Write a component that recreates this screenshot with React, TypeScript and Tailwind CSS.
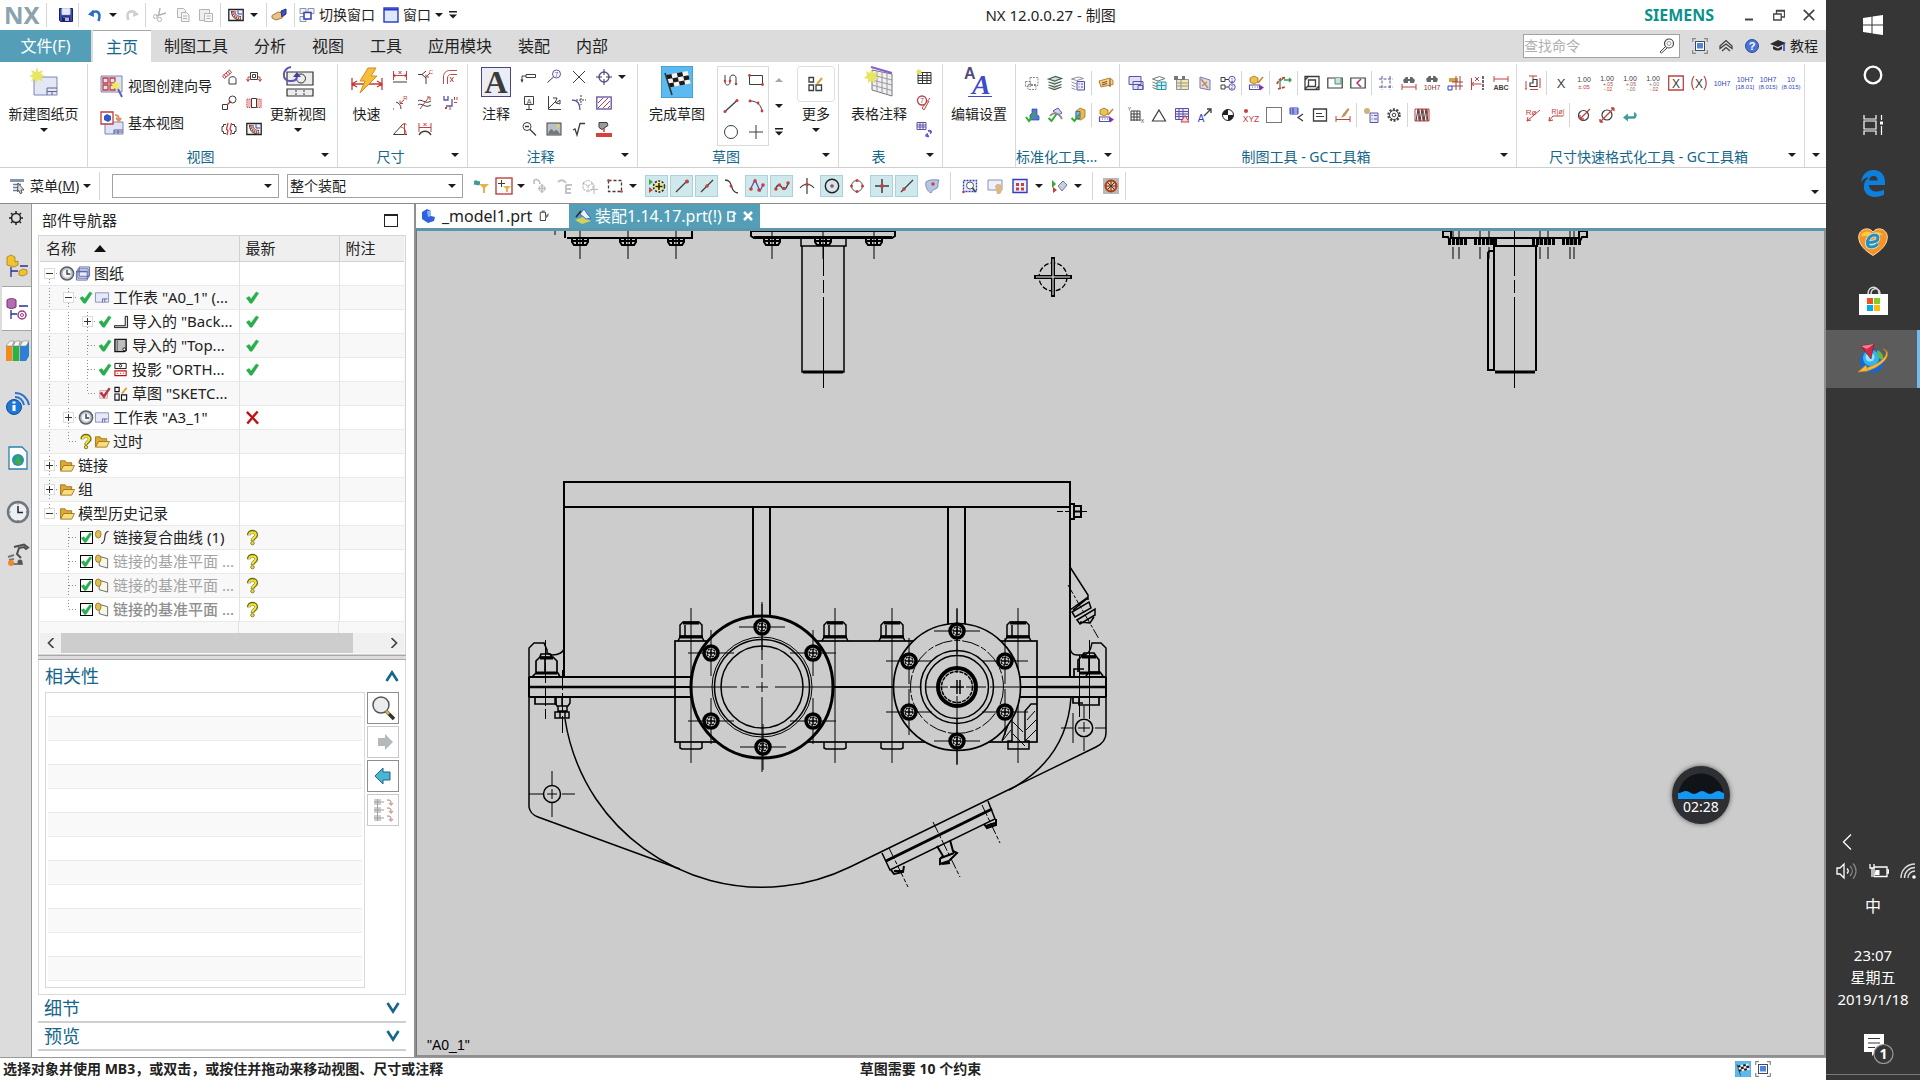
import React from 'react';

type PProps = { d: string; c?: string; f?: string; w?: number; dash?: string };

const P: React.FC<PProps> = ({ d, c = '#3d3d3d', f = 'none', w = 1, dash }) => (
  <path d={d} stroke={c} fill={f} strokeWidth={w} strokeDasharray={dash} />
);

const T: React.FC<{ x: number; y: number; s: number; c?: string; b?: boolean; children: React.ReactNode }> = ({
  x,
  y,
  s,
  c = '#3d3d3d',
  b,
  children,
}) => (
  <text x={x} y={y} fontSize={s} fill={c} fontWeight={b ? 700 : 400} textAnchor="middle" fontFamily="Liberation Sans, sans-serif">
    {children}
  </text>
);

const RED = '#c2403f';
const VIO = '#5b52a8';
const BLU = '#2f3fc0';
const GRY = '#b4b4b4';

// 16 x 16 glyphs
const glyphs: Record<string, React.ReactNode> = {
  save: (<><P d="M1.5 1.5h13v13h-12l-1-1z" c="#16206b" f="#3a4aa8" /><P d="M4 1.5h8v6H4z" c="#c9d2ee" f="#e6ebf8" /><P d="M4.5 10h7v4.5h-7z" c="#16206b" f="#aeb8dc" /><P d="M6 11v3" c="#16206b" w={2} /></>),
  undo: (<><P d="M5 6c5-3.500 9.500-.5 6.500 8" c="#2a6bd0" w={2.600} /><path d="M1 7.500 6.500 2.500 7 10z" fill="#2a6bd0" /></>),
  redo: (<><P d="M11 6C6 2.500 1.500 5.500 4.500 13" c="#cfcfcf" w={2.600} /><path d="M15 7.500 9.500 2.500 9 10z" fill="#cfcfcf" /></>),
  cut: (<><P d="M8 1 6.500 9M14 6 4 9" c={GRY} w={1.500} /><circle cx="3.500" cy="9.500" r="2" fill="none" stroke={GRY} /><circle cx="7.500" cy="12.500" r="2" fill="none" stroke={GRY} /></>),
  copy: (<><P d="M2.500 1.500h6l2 2v7h-8z" c={GRY} f="#f4f4f4" /><P d="M6.500 5.500h5l2.500 2.500v6.500H6.500zM8 9h4M8 11.500h4" c={GRY} f="#f4f4f4" /></>),
  paste: (<><P d="M1.500 2.500h10v11h-10z" c={GRY} f="#eee" /><P d="M4 2.500h5M6.500 6.500h8v8h-8zM8.500 9h4M8.500 11.500h4" c={GRY} f="#f7f7f7" /></>),
  section: (<><P d="M.8 2.500h14.400v11H.8z" c="#222" f="#f4f4f4" w={1.300} /><P d="M5 4c0 5 3 7.500 8 7.500" c={RED} w={2.500} dash="1.500 .8" /><P d="M3.500 4c0 6 3.500 9 9.500 9M7 4c0 3.500 2 5.500 6 5.500" c="#444" /><P d="M10 3.500V7h4" c={BLU} /></>),
  hand: (<><P d="M1 8.500 7 5l5 1-1 5-6 2-4-2z" c="#a9793b" f="#e8c184" /><P d="m10 4 5-2v5l-4 3z" c="#26307c" f="#4352b8" /></>),
  switchWin: (<><P d="M1 1.500h6v5H1zM9 1.500h6v5H9zM1 9.500h6v5H1z" c="#8d96a6" f="#eef1f6" /><P d="M5 5.500h7v6.500H5z" c={BLU} f="#fff" w={1.500} /></>),
  win: (<><rect x="1" y="1" width="14" height="14" fill="#dce8fb" stroke="#2636c8" strokeWidth="1.400" /><P d="M1 2.500h14" c="#2636c8" w={2} /></>),
  projAngle: (<><P d="m1.500 7 7-6 2 2.500-7 6zM3 5.500l2 2.500M5 4l2 2.500M7 2.500 9 5" c={RED} /><P d="M8 15V9.500C10 7 14.500 7 15 10v5z" /></>),
  revolve: (<><P d="M4.500 3.500h7v7h-7zM6.500 5.500h3v3h-3z" /><P d="M2 12V8h2M14 12V8h-2M.5 10 2 12.500 3.500 10M12.500 10l1.500 2.500 1.500-2.500" c={RED} /></>),
  detail: (<><circle cx="11.500" cy="4.500" r="3.500" fill="none" stroke="#3d3d3d" /><P d="M1.500 9.500h5v5h-5z" /><P d="m6 10 4-4" c={RED} w={1.500} /></>),
  crossSec: (<><P d="M.8 4h14.400v8.500H.8z" c={RED} f="#f3b7b7" dash="1 1" /><P d="M5.500 3.500h5v9h-5z" f="#fff" /></>),
  breakView: (<><P d="M5 3.500H2.500v2H1v5h1.500v2H5M11 3.500h2.500v2H15v5h-1.500v2H11" /><P d="M7 2 5.500 8 7 10l-1 4M10.500 2 9 8l1.500 2-1 4" c={RED} w={1.300} /></>),
  dimLin: (<><P d="M1.500 2v9M14.500 2v9M1.500 6.500h13M3.500 5 1.500 6.500l2 1.500M12.500 5l2 1.500-2 1.500M6.500 2l3 3M9.500 2l-3 3" c={RED} /><P d="M1 13h14" /></>),
  dimC: (<><P d="M1 5.500h4L9 9v6M5 5.500 9 2" /><P d="M9 8l4-4M9 5.500V8h3" c={RED} /><T x={14} y={5} s={6} c={RED}>C</T></>),
  dimThick: (<><P d="M1.500 15V8C1.500 4 4 1.500 8 1.500h7M5.500 15V9c0-2 1.500-3.500 3-3.500h6.500" c="#b0514f" /><P d="M8 8l3.500 5M11.500 8 8 13" c={RED} /></>),
  dimR: (<><P d="M1.500 13.500v1M4 7c3 1 5 3 5 7" /><P d="M8 8.500 12 5M8 5.500v3h3" c={RED} /><T x={13.5} y={5} s={6} c={RED}>R</T></>),
  dimCurve: (<><P d="M1 6c4-3 7 4 13 0M1 10c4-3 7 4 13 0" /><P d="M3 14 12 2M10 2h3v3" c={RED} /></>),
  dimOrd: (<><P d="M2 1v4h4V1M10 4v7H4" c={VIO} w={1.300} /><P d="M12.500 2v3M15 2v3M12 7.500h3M3 12l2 2M5 12l-2 2M8 12v3" c={RED} /></>),
  dimAng: (<><P d="M11 3 1.500 13.500H15" /><P d="M9 6c4 1 5 4 5 7M12.500 2v12M10.500 4l2-2 2 2" c={RED} /></>),
  dimArc: (<><P d="M2 2v9M14 2v9M2 6.500h12M6.500 2l3 3M9.500 2l-3 3" c={RED} /><P d="M2 14c3-5 9-5 12 0" w={1.400} /></>),
  leader: (<><P d="M1 12V7h4" /><P d="M5 5.500h9.500v3H5z" /><path d="M-.5 10.500h3L1 14z" fill="#3d3d3d" /></>),
  balloon: (<><circle cx="10.500" cy="5" r="4" fill="none" stroke={VIO} /><T x={10.5} y={7.5} s={7} c={VIO}>7</T><P d="M7.500 8 1.500 13.500" /></>),
  xmark: <P d="M2 2l12 12M14 2 2 14" />,
  target: (<><circle cx="8" cy="8" r="5" fill="none" stroke={VIO} strokeWidth="1.400" /><P d="M8 0v6M8 10v6M0 8h6M10 8h6" /></>),
  datum: (<><P d="M3.500 1.500h9v8h-9zM8 9.500V14M5 14.500h6" /><T x={8} y={8.500} s={7}>A</T></>),
  datumTgt: (<><P d="M2.500 1v13.500H15M3 13 10 6" /><P d="M7 3h4L9 8M10 8l4-3v4z" /></>),
  intersect: (<><P d="M1 5c5 0 8 3 8 10" c={VIO} w={1.300} /><P d="M10 0v10M5 5h10" dash="2 1" /></>),
  hatch: (<><rect x=".8" y="2" width="14.400" height="12" fill="#fff" stroke={VIO} strokeWidth="1.300" /><P d="m2 8 5-5M2 13 12 3M7 13l7-7M12 13l2-2" c={RED} /></>),
  zoomOut: (<><circle cx="6" cy="5.500" r="4" fill="none" stroke="#3d3d3d" /><P d="M4 5.500h4M9 8.500l6 6" w={1.300} /></>),
  image: (<><rect x="1" y="2" width="14" height="12" fill="#b9c0c8" stroke="#444" /><path d="M2 13c2-6 4-6 6-2 1-3 3-3 6 2z" fill="#777" /><circle cx="12" cy="5" r="1.500" fill="#e8d74f" /></>),
  sqrt: <P d="m2 9 2-1 2 6L9 2.500h5" w={1.300} />,
  paint: (<><P d="M3 1.500h8l1 3-6 4-3-2z" f="#9a9a9a" /><P d="M8 7v4" c={RED} w={1.500} /><rect x="0" y="12" width="16" height="4" fill="#d9403c" /></>),
  profile: (<><P d="M2 3v7c0 4 5 4 5 0V6c0-4 6-4 6 0v6" /><circle cx="2" cy="9" r="1.300" fill={RED} /><circle cx="7" cy="9" r="1.300" fill={RED} /><circle cx="13" cy="12" r="1.300" fill={RED} /></>),
  rect: (<><P d="M1.500 3.500h13v9h-13z" /><circle cx="1.500" cy="3.500" r="1.400" fill={RED} /><circle cx="14.500" cy="12.500" r="1.400" fill={RED} /></>),
  line: (<><P d="M2 13.500 14 2.500" w={1.300} /><circle cx="2" cy="13.500" r="1.500" fill={RED} /><circle cx="14" cy="2.500" r="1.500" fill={RED} /></>),
  lineEnd: (<><P d="M2 14 13 3" w={1.300} /><circle cx="13" cy="3.500" r="2" fill={RED} /></>),
  lineMid: (<><P d="M2 14 14 2" w={1.300} /><circle cx="8" cy="8" r="1.800" fill={RED} /></>),
  linePt: (<><P d="M2 14 14 2" w={1.300} /><circle cx="5" cy="11" r="1.800" fill={RED} /></>),
  arc: (<><P d="M2 3c7 0 11 4 12 10" /><circle cx="2" cy="3" r="1.400" fill={RED} /><circle cx="10" cy="5" r="1.400" fill={RED} /><circle cx="14" cy="13" r="1.400" fill={RED} /></>),
  circle: <circle cx="8" cy="8" r="6.500" fill="none" stroke="#3d3d3d" />,
  plus: <P d="M8 1v14M1 8h14" />,
  plusPt: (<><P d="M8 1v14M1 8h14" w={1.500} /><circle cx="8" cy="8" r="2" fill={RED} /></>),
  table: (<><path d="M2 3.500h13v11H2z" fill="#fff" stroke="#333" /><P d="M2 6.500h13M2 9h13M2 11.500h13M6.500 3.500v11M11 3.500v11" c="#333" /><circle cx="3" cy="3" r="2.500" fill="#dfe06a" /></>),
  balloonEdit: (<><circle cx="6" cy="5.500" r="4.500" fill="none" stroke={RED} strokeWidth="1.300" /><T x={6} y={8} s={7} c={VIO}>7</T><P d="M14 3 6 13l2 2 5-9" c={RED} /></>),
  tableSync: (<><P d="M1 1.500h9v7H1zM1 4h9M1 6h9M4 1.500v7M7 1.500v7" c={VIO} /><P d="M12 10c3-1 4 1 2 2.500M13 15c-3 1-4-1-1-2" c="#6a5cc8" w={2} /></>),
  assem: (<P d="M1.500 6.500h5v5h-5zM6 2.500h8v8H6zM4 9.500h8v5H4z" c="#8a8a8a" dash="2 1" />),
  layers: (<P d="m1.500 4 7-2.500 6 2-7 2.500zM1.500 7l6 2 7-2.500M1.500 10l6 2 7-2.500M1.500 12.500l6 2 7-2.500" c="#46604f" f="#d6dfd8" w={1.200} />),
  layersDoc: (<><P d="m1.500 4 7-2 5 1.500-7 2zM1.500 7l5 2M1.500 10l4 2M1.500 13l4 1.500" c="#8a90a0" /><P d="M7 6.500h7.500v8.500H7zM8.500 9h1M11 9h2M8.500 12h1M11 12h2" c={VIO} f="#e8eafa" /></>),
  tag: (<><P d="m1 6 11-3 3 2.500v4L3 12z" c="#b98032" f="#f3cf8e" /><P d="m4 8 5-1.500M4 10l5-1.500M12 4v8" c="#7a4b22" /></>),
  cubeOk: (<><path d="M8 2h5v6l2 1v4H6V8l2-2z" fill="#5379d6" stroke="#2747a0" strokeWidth=".7" /><P d="m2 10 3 4 6-8" c="#35ab35" w={2} /></>),
  sheetOk: (<><P d="m6 4 5-3 4 5-4 2z" c={VIO} f="#d7d4f4" /><P d="M3 9c4-5 9-3 12 3" c="#909090" w={2} /><P d="m1.500 11 3 3 5-7" c="#35ab35" w={2} /></>),
  boxOk: (<><path d="m6 4 4-3 5 2v7l-4 3-5-1z" fill="#f0b640" stroke="#9a6c15" strokeWidth=".7" /><P d="M6 4.500h4v7H6z" c="#3f6bc9" f="#8fb0ee" /><P d="m1.500 11 3 3 5-7" c="#35ab35" w={2} /></>),
  boxEdit: (<><path d="m2 3 4-2 4 2v4L6 9 2 7z" fill="#f1c24b" stroke="#8b641b" strokeWidth=".7" /><P d="m10 8 5-6" c="#c28634" w={1.500} /><P d="M1.500 10h10v4.500h-10zM4 12h1M6.500 12h1M9 12h1" c={VIO} w={1.200} /><path d="m12 10 4 2.500-4 3z" fill="#8a2bb8" /></>),
  cards: (<P d="M1 1.500h12v8H1zM5 6.500h10v8H5zM10 10.500h5v4h-5z" c={VIO} f="#dfe2f6" />),
  layersTbl: (<><P d="m1.500 4 7-2.500 5.500 2-7 2.500zM1.500 7l5 2M1.500 10l5 2M1.500 12.500l5 2" c="#6c7b74" /><P d="M6 7h9v7.500H6zM6 10.500h9M10.500 7v7.500" c="#2f97a5" f="#cdeff3" /></>),
  noteTbl: (<><P d="M2.500 4.500h12v10h-12z" c="#8f8fb6" f="#f6eaa0" /><P d="M2.500 8h12M2.500 11h12M7 4.500v10" c="#8f8fb6" /><path d="M0 1h4v3h4V1h3v4H0z" fill="#777" /></>),
  persp: (<><P d="M3 2v11l10 2V5z" c="#7d77b5" f="#dcd9f2" /><P d="m4 4 7 9M5 11l5-4" c="#c2902f" w={1.500} /></>),
  numList: (<><P d="M1 2.500h4v4H1zM1 10h4v4H1zM5 4.500h4M5 12h4" /><circle cx="12" cy="4.500" r="3.200" fill="none" stroke={VIO} /><circle cx="12" cy="12" r="3.200" fill="none" stroke={VIO} /><T x={12} y={6.500} s={6} c={VIO}>1</T><T x={12} y={14} s={6} c={VIO}>2</T></>),
  csys: (<><P d="M8 5h7M4 13V6l4-3M13 3l2 2-2 2" c="#2d9a4a" w={1.300} /><P d="M1 9c2-5 5-7 9-6M2 14l7-2" c={RED} w={1.800} dash="3 1" /></>),
  frame: (<P d="M1 1.500h14v13H1zM4.500 5h7v6.500h-7zM1 5l3.500-3.500M1 14l3.500-3.500M12 14l3-3" w={1.300} />),
  frameIn: (<><P d="M.8 3h14.400v10H.8z" w={1.200} /><P d="M8 3v6h6V3" c="#3f9a56" f="#c6dff2" /></>),
  frameV: (<><P d="M.8 3h14.400v10H.8z" w={1.200} /><P d="M11 4 7 8l4 4" c="#b03070" w={1.500} /></>),
  gridH: (<P d="M4 1v14M12 1v14M1 4h14M1 12h14" c={VIO} dash="3 1.500" />),
  binoDim: (<><path d="M2 5 5 2h2v2h2V2h2l3 3-1 3h-4V6H7v2H3z" fill="#666" /><P d="M1 9v6M15 9v6M1 12h14" c={RED} /></>),
  bino10: (<><path d="M2 4 5 1h2v2h2V1h2l3 3-1 3h-4V5H7v2H3z" fill="#666" /><T x={8} y={15} s={7} c="#8a3030">10H7</T></>),
  binoGrid: (<><path d="M2 3h9v4H2z" fill="#cda544" /><P d="M9 1v14M13 1v14M5 7h11M5 11h11" c="#a04545" /><P d="M1 11h4v4H1z" c={BLU} /></>),
  dimX: (<><P d="M1.500 3v12M1.500 9h10M4 7 1.500 9 4 11M5 2l4 4M9 2 5 6" c={RED} /><P d="M13 1v14" dash="3 1" w={1.500} /></>),
  dimABC: (<><P d="M1 1v6M15 1v6M1 4h14" c={RED} /><T x={8} y={15} s={7} b>ABC</T></>),
  dimBox: (<><P d="M8 4.500h4v7H5V8h3z" w={1.200} /><P d="M4 1h8M1 6v8M15 3v10M5 14.500h8M8 1v3M0 14h2" c={RED} /></>),
  x: <T x={8} y={13} s={13}>X</T>,
  tol1: (<><T x={8} y={7} s={7}>1.00</T><T x={8} y={14} s={6} c={RED}>±.05</T></>),
  tol2: (<><T x={8} y={6} s={7}>1.00</T><T x={9} y={11} s={5} c={RED}>+.05</T><T x={9} y={16} s={5} c={RED}>-.02</T></>),
  tol3: (<><T x={8} y={6} s={7}>1.00</T><T x={9} y={11} s={5} c={RED}>+.05</T><T x={9} y={16} s={5} c="#777">-.00</T></>),
  tol4: (<><T x={8} y={6} s={7}>1.00</T><T x={9} y={11} s={5} c="#777">+.00</T><T x={9} y={16} s={5} c={RED}>-.02</T></>),
  xbox: (<><P d="M.7 1h14.600v14H.7z" c={RED} w={1.300} /><T x={8} y={13} s={12}>X</T></>),
  xparen: (<><P d="M3 1C0 5 0 11 3 15M13 1c3 4 3 10 0 14" c={RED} w={1.200} /><T x={8} y={13} s={12}>X</T></>),
  h7: <T x={8} y={11} s={7} c={BLU}>10H7</T>,
  h7a: (<><T x={8} y={6.500} s={7} c={BLU}>10H7</T><T x={8} y={14} s={6} c={BLU}>[18.01]</T></>),
  h7b: (<><T x={8} y={6.500} s={7} c={BLU}>10H7</T><T x={8} y={14} s={6} c={BLU}>(8.015)</T></>),
  h7c: (<><T x={8} y={6.500} s={7} c={BLU}>10</T><T x={8} y={14} s={6} c={BLU}>(8.015)</T></>),
  gridYX: (<><P d="M3 4h9M3 7h9M3 10h9M3 13h9M3 4v10M6 4v10M9 4v10M12 4v10" /><T x={1.500} y={4} s={5}>Y</T><T x={14.500} y={16} s={5}>X</T></>),
  tri: <P d="M8 3 14.500 14h-13z" w={1.200} />,
  tblTri: (<><P d="M1.500 1.500h13v11h-13zM1.500 4.500h13M1.500 7h13M1.500 9.500h13M5 1.500v11M9 1.500v11" c={VIO} f="#eceaf8" /><P d="M11 8.500 15 15H7z" c={RED} f="#fbdada" /></>),
  aArrow: (<><T x={4} y={15} s={10} c={BLU}>A</T><P d="m7 9 7-7M10 2h4v4" w={1.300} /></>),
  quad: (<><circle cx="8" cy="8" r="5.500" fill="#fff" stroke="#222" /><path d="M8 8V2.500A5.500 5.500 0 0 0 2.500 8zM8 8v5.500A5.500 5.500 0 0 0 13.500 8z" fill="#222" /></>),
  xyz: (<><circle cx="3" cy="4" r="2" fill={RED} /><T x={8} y={15} s={8.500} c={RED}>XYZ</T></>),
  blank: <rect x=".5" y=".5" width="15" height="15" fill="#fff" stroke="#777" />,
  tblC: (<><P d="M1 1h8v6H1zM1 3h8M1 5h8M4 1v6" c={BLU} /><P d="m14 7-5 3.500 5 3.500" w={1.300} /></>),
  note: (<><P d="M1.500 2h13v12h-13z" w={1.300} /><P d="M4 6.500h6M4 9.500h8" w={1.200} /></>),
  brushDim: (<><path d="m8 7 5-6 1.500 1.500L10 9l-4 2z" fill="#b9975a" /><P d="M1 9v6M15 9v6M1 12.500h14" c={RED} /></>),
  gearList: (<><circle cx="4" cy="4" r="3" fill="#cdb27a" /><P d="M7 6h8v9.500H7zM8.500 8.500h1M11 8.500h3M8.500 12h1M11 12h3" c={VIO} f="#e8eafa" /></>),
  gear: (<><circle cx="8" cy="8" r="5.500" fill="none" stroke="#444" strokeWidth="2.500" strokeDasharray="2 1.450" /><circle cx="8" cy="8" r="4.500" fill="#fff" stroke="#444" /><circle cx="8" cy="8" r="1.800" fill="none" stroke="#444" /></>),
  spring: (<><P d="M1 2v12M4 14 6 2M8 14l2-12M12 14l2-12M15 2v12M1 2h14M1 14h14" c={RED} /><P d="M2 14 4 2l2 12L8 2l2 12 2-12 2 12" /></>),
  rphi: (<><P d="M2 14 15 3M2 14l1-4M2 14l4-1" c={RED} /><T x={6} y={8} s={8} c={RED}>Rø</T></>),
  rphiB: (<><P d="m1 14 4-5h10M1 14l.5-4M1 14l4-1" c={RED} /><T x={10} y={7} s={7} c={RED}>R|ø|</T></>),
  dia: (<><circle cx="7.500" cy="8.500" r="5" fill="none" stroke="#3d3d3d" strokeWidth="1.200" /><P d="M4 12 14 2M4 12v-4M4 12h4" c={RED} w={1.300} /></>),
  dia2: (<><circle cx="8" cy="8" r="5" fill="none" stroke="#3d3d3d" strokeWidth="1.200" /><P d="M1 15 15 1M1 15v-3M1 15h3M15 1v3M15 1h-3" c={RED} w={1.300} /></>),
  back: (<><P d="M5 10.500h6c3 0 3-4 1-4" c="#3f9d98" w={2.500} /><path d="m1 10.500 5-4v8z" fill="#3f9d98" /></>),
  menu: (<><P d="M0 2.500h14" c="#8796b0" w={3} /><P d="M3 6.500h8M3 9.500h6M3 12.500h6" c="#6b7f9c" w={1.500} /><path d="m8 5 6 7h-3l1 3-2 .5-1-3-1.500 1z" fill="#ddd" stroke="#333" strokeWidth=".8" /></>),
  filter: (<><path d="M1 3c3-2 3 1 6 0v4c-3 1-4-1-6 0z" fill="#3f9d98" /><path d="M6 6h10l-4 4v5h-2v-5z" fill="#e6b34b" /></>),
  filterBox: (<><rect x="0" y="0" width="16" height="16" fill="#fff" stroke={RED} strokeWidth="1.400" /><P d="M5.500 2v7M2 5.500h7" /><path d="M7 8h8l-3 3v3h-2v-3z" fill="#e6b34b" /></>),
  ghost1: (<><P d="M2 2c3-1 6 0 6 4M2 2v4M10 6v9M6 10.500h8" c="#bcbcbc" w={1.500} /><circle cx="10" cy="10.500" r="3" fill="none" stroke="#bcbcbc" /></>),
  ghost2: (<P d="M1 4c3-3 6-2 8 1M9 7h6M9 7v8h5M9 11h5" c="#c4c4c4" w={2} />),
  ghost3: (<><P d="m1 5 5-3 5 3v6l-5 3-5-3zM6 8v6M1 5l5 3 5-3" c="#a8a8a8" dash="2 1" /><P d="M12 7v9M8 11.500h8" c="#b8b8b8" /></>),
  selRect: (<><P d="M1.500 2.500h13v11h-13z" w={1.300} dash="3 2" /><circle cx="1.500" cy="2.500" r="1.300" fill={RED} /><circle cx="14.500" cy="13.500" r="1.300" fill={RED} /></>),
  snap: (<><path d="m10 3 6 5.500-6 5.500-6-5.500z" fill="#f4ec75" /><circle cx="10" cy="8.500" r="5.500" fill="none" stroke="#222" strokeWidth="1.500" strokeDasharray="2 1.500" /><P d="M10 5v7M6.500 8.500h7" c="#222" w={1.500} /><path d="m0 1 4 3-4 3z" fill="#35ab35" /><path d="m0 9 4 3-4 3z" fill={RED} /></>),
  curveEnd: (<><P d="M1 2c9 0 4 12 13 13" w={1.300} /><circle cx="7" cy="8" r="1.500" fill={RED} /></>),
  poly: (<><P d="M1 12 6 2l5 11 3-6" c={VIO} w={1.300} /><circle cx="2" cy="11" r="1.800" fill={RED} /><circle cx="6" cy="3" r="1.800" fill={RED} /><circle cx="10" cy="12" r="1.800" fill={RED} /><circle cx="14" cy="7" r="1.800" fill={RED} /></>),
  spline: (<><P d="M1 12c4-10 7-2 8-1 3 2 4-4 6-7" w={1.300} /><circle cx="2" cy="11" r="1.700" fill={RED} /><circle cx="5.500" cy="7" r="1.700" fill={RED} /><circle cx="10" cy="10.500" r="1.700" fill={RED} /><circle cx="14" cy="5" r="1.700" fill={RED} /></>),
  crossArc: (<><P d="M8 0v16M1 10c4-5 10-5 14 0" w={1.200} /><circle cx="8" cy="6.500" r="1.800" fill={RED} /></>),
  circPt: (<><circle cx="8" cy="8" r="6.700" fill="none" stroke="#222" strokeWidth="1.400" /><circle cx="8" cy="8" r="1.800" fill={RED} /></>),
  quadPt: (<><circle cx="8" cy="8" r="5.500" fill="none" stroke="#555" /><circle cx="8" cy="2.500" r="1.500" fill={RED} /><circle cx="8" cy="13.500" r="1.500" fill={RED} /><circle cx="2.500" cy="8" r="1.500" fill={RED} /><circle cx="13.500" cy="8" r="1.500" fill={RED} /></>),
  face: (<><path d="M2 4c4-3 8-2 13-2-2 4 0 6-2 8-3 2-4 1-6 5-4-2-6-7-5-11z" fill="#b8c6e6" stroke="#6178ac" strokeWidth=".8" /><circle cx="9" cy="6" r="1.700" fill={RED} /></>),
  zoomWin: (<><P d="M1.500 2.500h13v11h-13z" c={BLU} f="#eaf0fb" dash="2 1" w={1.300} /><circle cx="8" cy="7.500" r="3.500" fill="#fff" stroke="#555" /><P d="m10.500 10 3 4" w={1.500} /><circle cx="1.500" cy="14" r="1.300" fill={RED} /></>),
  pan: (<><P d="M1 2h14v10H1z" c="#8b93ad" f="#edf1f9" /><path d="M8 8c2-3 6-2 7 0v5l-2 3h-3z" fill="#dcb888" /></>),
  fit: (<><P d="M1 1.500h14v13H1z" c={BLU} f="#eef1fc" w={1.400} /><path d="M4 5h3v3H4zM9 5h3v3H9zM4 9.500h3v3H4zM9 9.500h3v3H9z" fill={RED} /></>),
  orient: (<><path d="m1 2 4 4-4 4z" fill="#35ab35" /><path d="m2 9 4 3-4 3z" fill={RED} /><path d="m7 8 5-5 4 4-5 6z" fill="#c9cde4" stroke="#555c85" strokeWidth=".8" /></>),
  wheel: (<><rect width="16" height="16" fill="#b9b9b9" /><circle cx="8" cy="8" r="5.500" fill="#f3d35a" stroke="#b23b1e" strokeWidth="2" /><P d="M8 3v10M3 8h10M4.500 4.500l7 7M11.500 4.500l-7 7" c="#4b2a6b" /></>),
  more: (<><P d="M1 1.500h4.500V6H1zM1 9h4.500v5.500H1zM8 9h5.500v5.500H8z" w={1.300} /><P d="m9 8 5-6" c="#d9a52e" w={2} /></>),
  full: (<><P d="M.7 4V.7H4M12 .7h3.300V4M15.300 12v3.300H12M4 15.300H.7V12" c="#888" w={1.200} /><rect x="3.500" y="3.500" width="9" height="9" fill="#fff" stroke="#3c4a66" /><rect x="5" y="5" width="6" height="5.500" fill="#4f86d8" /></>),
  up2: <P d="m2 8 6-5.500L14 8v2.500L8 6l-6 4.500zM4 13l4-3.500 4 3.500" w={1.200} />,
  help: (<><circle cx="8" cy="8" r="6.500" fill="#4b73d1" stroke="#2d4fa8" /><T x={8} y={12} s={11} c="#fff" b>?</T></>),
  cap: (<><path d="M0 6 8 2l8 3-8 4zM3 8l5 2.500L12 8v3c-2 2-6 2-9 0z" fill="#2b2b2b" /><P d="M14 5.500V13" c={BLU} w={1.500} /></>),
  search: (<><circle cx="10" cy="5.500" r="4.500" fill="none" stroke="#444" strokeWidth="1.200" /><circle cx="10" cy="5.500" r="2" fill="none" stroke="#999" /><P d="M6.500 8.500 1 14l1.500 1L8 10" c="#444" /></>),
  clock: (<><circle cx="8" cy="8" r="7" fill="#c3cad2" stroke="#59606a" strokeWidth="1.600" /><circle cx="8" cy="8" r="5" fill="#f3f6f9" stroke="#9aa3ad" strokeWidth=".6" /><P d="M8 4v4.500h3.500" w={1.500} /></>),
  sheets: (<><P d="M4 1h11v10H4zM2.500 3h11v10h-11zM1 5.500h11.500V15H1z" c="#5d6aa5" f="#e9ecf8" /><P d="M1 6h11.500" c="#5d6aa5" w={1.500} /></>),
  sheet: (<><P d="M1 3h14v10H1z" c="#8a90bd" f="#e6e9f7" /><P d="M8.500 9.500H14M11 9.500V13M8.500 9.500V13" c="#5d6aa5" /></>),
  ok: <path d="M1.500 8.500 4.500 7 6.500 9.500 12 2l2.500 1.500L7.500 14h-2z" fill="#22b14c" stroke="#22a243" strokeWidth=".5" />,
  bad: <P d="m2 2 12 12.500M13.500 1.500 2.500 14.500" c="#c40f12" w={2.500} />,
  okRed: (<><P d="M2.500 5h8v8h-8z" c="#c99" /><path d="M2 7.500 5 6l1.500 3L12 1.500 14 3 7 13.500z" fill="#b53a3f" /></>),
  ask: (<><P d="M4 5.500C4 .5 12 .5 12 5.500c0 3-4 2.500-4 6" c="#6f6a17" w={4} /><P d="M4.500 5.300c0-4 7-4 7 0 0 3-3.500 2.500-3.500 5.500" c="#efe43a" w={2.200} /><circle cx="8" cy="14" r="1.800" fill="#efe43a" stroke="#6f6a17" strokeWidth=".9" /></>),
  folder: (<><path d="M1 13V3h5l1.500 2H13v3z" fill="#e0a92c" stroke="#8a6412" strokeWidth=".8" /><path d="M1 14 4.500 8H16l-3 6z" fill="#fbdc7c" stroke="#8a6412" strokeWidth=".8" /></>),
  ell: <P d="M1 12.500h11.500V2.500H15v12H1z" c="#111" f="#ddd" />,
  plate: (<><P d="M1.500 1.500h12v12l-2 1h-10z" c="#111" f="#bdbdbd" w={1.400} /><P d="M4 1.500V14" c="#555" /><circle cx="11.500" cy="12" r="1.500" fill="#fff" stroke="#111" /></>),
  ortho: (<><P d="M1.500 1.500h12v5.500h-12z" c="#111" /><circle cx="7.500" cy="4" r="1.300" fill="none" stroke="#111" /><P d="M1.500 9.500h12v5h-12zM4 12h1M7 12h1M10 12h1" c="#c40f12" w={1.200} /></>),
  sketch: (<><P d="M1.500 1.500H6V6H1.500zM1.500 8.500H6V15H1.500zM8.500 9.500H14V15H8.500zM8.500 9.500h4" c="#111" w={1.200} /><P d="m9 8 5-6" c="#d9a52e" w={2} /></>),
  linkCurve: (<><ellipse cx="4" cy="4.500" rx="3" ry="4" fill="#e2bf52" stroke="#85691a" strokeWidth=".8" /><P d="M15 1.500c-7 0-1 12-8 13" w={1.300} /></>),
  linkPlane: (<><P d="M5 2.500 14 5v10l-9-2.500z" c="#666" f="#f6f9e6" /><ellipse cx="4" cy="5" rx="3" ry="4" fill="#e2bf52" stroke="#85691a" strokeWidth=".8" /></>),
  flag: (
    <>
      <rect x=".2" y=".2" width="15.600" height="15.600" fill="#5bbaf0" stroke="#3c93ca" strokeWidth=".4" />
      <path d="M2.500 4.500 13.300 2.500 14.800 8.800 4 10.800z" fill="#f4f4f4" />
      <path d="m2.500 4.500 2.700-.5.500 2.100-2.700.5zM7.900 3.500l2.700-.5.500 2.100-2.700.5zM5.700 6.100l2.700-.5.500 2.100-2.700.5zM11.100 5.100l2.700-.5.500 2.100-2.700.5zM3.500 8.700l2.700-.5.500 2.100-2.700.5zM8.900 7.700l2.700-.5.500 2.100-2.700.5z" fill="#1c1c1c" />
      <P d="m2 3.500 3.500 11" c="#333" w={0.800} />
    </>
  ),
  lock: (<><P d="M3 3h7v11H3zM5 1.500h4" w={1.300} /><path d="m9 9 5-5v4l-4 4z" fill="#777" /></>),
  part: (<><path d="m2 4 5-3 4 2v5l4 1-1 4-6 2-6-4z" fill="#2f62dc" /><path d="m7 3 4 0v5l-3 1z" fill="#8cb3fa" /></>),
  drafting: (<><path d="m0 12 8-3 8 4-9 3z" fill="#cfd35c" /><path d="M5 6 9 1l4 6 3 3-5 1z" fill="#eef3ff" stroke="#2a4fd0" strokeWidth=".8" /><P d="m1 9 5-6" c="#2b2b2b" w={1.500} /></>),
};

const Icon: React.FC<{ name: string; className?: string }> = ({ name, className = 'h-4 w-4' }) => (
  <svg viewBox="0 0 16 16" className={`${className} shrink-0 overflow-visible`} aria-hidden="true">
    {glyphs[name]}
  </svg>
);

const Caret: React.FC<{ className?: string }> = ({ className = '' }) => (
  <svg viewBox="0 0 8 4" className={`h-1 w-2 shrink-0 ${className}`} aria-hidden="true">
    <path d="M0 0h8L4 4z" fill="#1c1c1c" />
  </svg>
);

const ListCaret = () => (
  <svg viewBox="0 0 8 8" className="h-2 w-2 shrink-0" aria-hidden="true">
    <path d="M0 0h8v1.500H0zM0 3.500h8L4 7.500z" fill="#1c1c1c" />
  </svg>
);

const Sep: React.FC<{ className?: string }> = ({ className = 'h-6' }) => (
  <span className={`w-px shrink-0 bg-[#d6d6d6] ${className}`} />
);

const IconButton: React.FC<{ name: string; className?: string }> = ({ name, className = 'h-6 w-[23px]' }) => (
  <button type="button" aria-label={name} className={`flex shrink-0 items-center justify-center ${className}`}>
    <Icon name={name} />
  </button>
);

const IconRow: React.FC<{ names: string[] }> = ({ names }) => (
  <div className="flex h-8 items-center">
    {names.map((name, i) =>
      name === '|' ? <Sep key={i} className="mx-[2px] h-6" /> : <IconButton key={i} name={name} className="h-6 w-[23px]" />,
    )}
  </div>
);

const Group: React.FC<{ label?: string; className?: string; children?: React.ReactNode }> = ({ label, className = '', children }) => (
  <section className={`flex shrink-0 flex-col ${className}`}>
    <div className="flex flex-1">{children}</div>
    {label && (
      <div className="flex h-5 items-center justify-center whitespace-nowrap text-sm text-[#14668a]">
        <span className="flex-1 text-center">{label}</span>
        <button type="button" aria-label={`${label} 选项`} className="mb-1 flex w-6 justify-center">
          <Caret />
        </button>
      </div>
    )}
  </section>
);

const BigButton: React.FC<{ label: string; caret?: boolean; className?: string; children: React.ReactNode }> = ({
  label,
  caret,
  className = '',
  children,
}) => (
  <button type="button" className={`flex shrink-0 flex-col items-center pt-0.5 whitespace-nowrap ${className}`}>
    <span className="flex h-8 items-center">{children}</span>
    <span className="mt-1.5 h-5 text-sm leading-5">{label}</span>
    {caret && <Caret className="mt-1" />}
  </button>
);

const SmallGrid: React.FC<{ names: string[]; className?: string }> = ({ names, className = '' }) => (
  <div className={`grid h-[78px] content-start ${className}`}>
    {names.map((name) => (
      <IconButton key={name} name={name} className="h-[26px] w-[25px]" />
    ))}
  </div>
);

const TitleBar = () => (
  <header className="flex h-[30px] items-center bg-white pl-1">
    <span className="w-10 text-2xl leading-[30px] font-bold text-[#8ba3ae]">NX</span>
    <Sep className="mr-[7px] ml-0.5 h-6" />
    <IconButton name="save" />
    <Sep className="mr-1 ml-[1px] h-6" />
    <IconButton name="undo" />
    <Caret className="mx-[3px]" />
    <IconButton name="redo" />
    <Sep className="mx-0.5 h-6" />
    <IconButton name="cut" />
    <IconButton name="copy" />
    <IconButton name="paste" />
    <Sep className="mx-[3px] h-6" />
    <IconButton name="section" />
    <Caret className="mx-[3px]" />
    <Sep className="ml-[5px] h-6" />
    <IconButton name="hand" />
    <Sep className="mx-1 h-6" />
    <button type="button" className="flex items-center gap-1 text-sm whitespace-nowrap">
      <Icon name="switchWin" />
      切换窗口
    </button>
    <button type="button" className="ml-2 flex items-center gap-1 text-sm whitespace-nowrap">
      <Icon name="win" />
      窗口
      <Caret />
    </button>
    <span className="ml-1.5 flex">
      <ListCaret />
    </span>
    <h1 className="flex-1 text-center text-[15px]">NX 12.0.0.27 - 制图</h1>
    <span className="text-base font-bold text-[#0a928c]">SIEMENS</span>
    <div className="ml-5 flex">
      <button type="button" aria-label="最小化" className="flex h-[30px] w-[30px] items-center justify-center">
        <svg viewBox="0 0 12 12" className="h-3 w-3"><path d="M2 10.500h8" stroke="#444" strokeWidth="2" /></svg>
      </button>
      <button type="button" aria-label="还原" className="flex h-[30px] w-[30px] items-center justify-center">
        <svg viewBox="0 0 12 12" className="h-3 w-3"><path d="M.7 5h7.500v6H.7zM3.500 5V1.500h8V8H8.500M3.500 2h8" fill="none" stroke="#444" strokeWidth="1.300" /></svg>
      </button>
      <button type="button" aria-label="关闭" className="mr-0.5 flex h-[30px] w-[30px] items-center justify-center">
        <svg viewBox="0 0 12 12" className="h-3 w-3"><path d="m.8.8 10.400 10.400M11.200.8.8 11.200" stroke="#444" strokeWidth="1.700" /></svg>
      </button>
    </div>
  </header>
);

const tabs = ['制图工具', '分析', '视图', '工具', '应用模块', '装配', '内部'];

const TabBar = () => (
  <nav className="flex h-8 items-stretch bg-[#dcdcdc] text-base">
    <button type="button" className="w-[91px] bg-[#549fb7] text-white">文件(F)</button>
    <button type="button" className="ml-0.5 border-t border-[#a5a5a5] bg-white px-[13px] text-[#14668a]">主页</button>
    {tabs.map((tab) => (
      <button type="button" key={tab} className="px-[13px] whitespace-nowrap text-[#222]">{tab}</button>
    ))}
    <div className="ml-auto flex items-center gap-2.5 pr-2">
      <label className="mr-0.5 flex h-6 w-[157px] items-center border border-[#a2a2a2] bg-white pr-1">
        <input type="text" aria-label="查找命令" placeholder="查找命令" className="w-full min-w-0 text-sm outline-none placeholder:text-[#b0b0b0]" />
        <Icon name="search" />
      </label>
      <IconButton name="full" className="h-6 w-4" />
      <IconButton name="up2" className="h-6 w-4" />
      <IconButton name="help" className="h-6 w-4" />
      <button type="button" className="flex items-center gap-1 text-sm whitespace-nowrap">
        <Icon name="cap" />
        教程
      </button>
    </div>
  </nav>
);

const gcRow1 = ['cards', 'layersTbl', 'noteTbl', 'persp', 'numList', '|', 'boxEdit', '|', 'csys', '|', 'frame', 'frameIn', 'frameV', '|', 'gridH', 'binoDim', 'bino10', 'binoGrid', 'dimX', 'dimABC'];
const gcRow2 = ['gridYX', 'tri', 'tblTri', 'aArrow', 'quad', 'xyz', 'blank', 'tblC', 'note', 'brushDim', '|', 'gearList', 'gear', '|', 'spring'];
const fmtRow1 = ['dimBox', '|', 'x', 'tol1', 'tol2', 'tol3', 'tol4', 'xbox', 'xparen', 'h7', 'h7a', 'h7b', 'h7c'];
const fmtRow2 = ['rphi', 'rphiB', '|', 'dia', 'dia2', 'back'];

const Ribbon = () => (
  <div className="flex h-[106px] divide-x divide-[#d9d9d9] border-b border-[#cfcfcf] bg-white pt-0.5">
    <Group className="w-[88px]">
      <BigButton label="新建图纸页" caret className="w-full">
        <svg viewBox="0 0 32 32" className="h-8 w-8">
          <path d="M6 11h23v18H6z" fill="#e4e7f6" stroke="#7d84b4" />
          <path d="M19 22h10M19 25.500h10M19 22v7M24 25.500V29" stroke="#5c6596" fill="none" />
          <path d="m9 1 1.500 5L15 4l-2 4 4 2-4 1.500 2 4-5-2-1.500 4-1.500-4-4 2 2-4-4-1.500 4-2-2-4 4.500 2z" fill="#e7e663" />
        </svg>
      </BigButton>
    </Group>
    <Group label="视图" className="w-[250px]">
      <div className="flex flex-col pt-1 pl-3">
        <button type="button" className="flex h-9 items-center gap-1 text-sm whitespace-nowrap">
          <svg viewBox="0 0 24 24" className="h-6 w-6 shrink-0">
            <path d="M1 2h21v16H1z" fill="#e0e3f5" stroke="#7d84b4" />
            <path d="M3 4h5v5H3zM10 4h5v5h-5zM3 11h5v5H3zM10 11h5v5h-5z" fill="none" stroke="#c23c3c" strokeWidth="1.300" />
            <path d="m16 7 1 3 3-1-1 3 2 2-3 0-1 3-2-3-3 1 1-3-2-2 3-1z" fill="#eeea5e" />
            <path d="m18 15 4 8" stroke="#5b5fc7" strokeWidth="2" />
          </svg>
          视图创建向导
        </button>
        <button type="button" className="flex h-[38px] items-center gap-1 text-sm whitespace-nowrap">
          <svg viewBox="0 0 24 24" className="h-6 w-6 shrink-0">
            <path d="M5 11h18v12H5z" fill="#e0e3f5" stroke="#7d84b4" />
            <path d="M14 19h9M14 21h9M14 19v4M18 19v4" stroke="#5c6596" fill="none" />
            <path d="M1 1h12v12H1z" fill="#fff" stroke="#c23c3c" strokeWidth="1.300" />
            <path d="M4 5 7 3l4 2v4l-3 2-4-2z" fill="#3558c4" />
            <path d="M15 4c3 0 4 2 4 5m-3-2 3 3 2-3" fill="none" stroke="#e0915f" strokeWidth="2" />
          </svg>
          基本视图
        </button>
      </div>
      <SmallGrid names={['projAngle', 'revolve', 'detail', 'crossSec', 'breakView', 'section']} className="ml-1 grid-cols-2" />
      <BigButton label="更新视图" caret className="ml-1">
        <svg viewBox="0 0 32 32" className="h-8 w-8">
          <path d="M5 6h26v13H5zM5 23h26v7H5z" fill="#ececec" stroke="#333" strokeWidth="1.200" />
          <circle cx="19" cy="12.500" r="4.500" fill="none" stroke="#333" />
          <path d="M14 24v5M22 24v5" stroke="#333" strokeDasharray="2 1" />
          <path d="M9 1C0 2-1 16 9 15c4 0 6-2 6-5" fill="none" stroke="#5a55b8" strokeWidth="2" />
          <path d="m11 11 4-5 4 5z" fill="#40409a" />
        </svg>
      </BigButton>
    </Group>
    <Group label="尺寸" className="w-[130px]">
      <BigButton label="快速" className="w-[49px] pl-2">
        <svg viewBox="0 0 32 32" className="h-8 w-8">
          <path d="M1 12v12M31 12v12M1 18h30M6 15l-5 3 5 3M26 15l5 3-5 3" fill="none" stroke="#c23c3c" strokeWidth="1.300" />
          <path d="M17 2h8l-5 8h6L9 27l5-12H9z" fill="#f6bf3b" stroke="#d68b1e" />
        </svg>
      </BigButton>
      <SmallGrid names={['dimLin', 'dimC', 'dimThick', 'dimR', 'dimCurve', 'dimOrd', 'dimAng', 'dimArc']} className="grid-cols-3" />
    </Group>
    <Group label="注释" className="w-[170px]">
      <BigButton label="注释" className="w-[48px] pl-2">
        <span className="flex h-[30px] w-[30px] items-center justify-center border border-[#4a4585] bg-[#ececf4] font-['Liberation_Serif',serif] text-[32px] leading-[30px] font-bold text-[#3b3b3b]">A</span>
      </BigButton>
      <SmallGrid names={['leader', 'balloon', 'xmark', 'target', 'datum', 'datumTgt', 'intersect', 'hatch', 'zoomOut', 'image', 'sqrt', 'paint']} className="grid-cols-4" />
      <Caret className="mt-[11px] ml-0.5" />
    </Group>
    <Group label="草图" className="w-[201px]">
      <BigButton label="完成草图" className="ml-[11px]">
        <Icon name="flag" className="h-8 w-8" />
      </BigButton>
      <div className="mt-0.5 ml-3 grid h-20 grid-cols-2 border border-[#dadada]">
        {['profile', 'rect', 'line', 'arc', 'circle', 'plus'].map((name) => (
          <IconButton key={name} name={name} className="h-[26px] w-[25px]" />
        ))}
      </div>
      <div className="flex w-5 flex-col items-center pt-3.5">
        <svg viewBox="0 0 8 4" className="h-1 w-2"><path d="M0 4h8L4 0z" fill="#a8a8a8" /></svg>
        <Caret className="mt-[22px]" />
        <span className="mt-5"><ListCaret /></span>
      </div>
      <button type="button" className="mt-0.5 ml-2 flex flex-col items-center justify-start self-start text-sm">
        <span className="flex h-9 w-[38px] items-center justify-center rounded-sm border border-[#dedede]"><Icon name="more" /></span>
        <span className="mt-0.5 h-5 leading-5">更多</span>
        <Caret className="mt-1" />
      </button>
    </Group>
    <Group label="表" className="w-[104px]">
      <BigButton label="表格注释" className="ml-3">
        <svg viewBox="0 0 32 32" className="h-8 w-8">
          <path d="M9 4v20l20 6V8z" fill="#f0f0f4" stroke="#777" />
          <path d="m9 9 20 5M9 14l20 5M9 19l20 5.500M14 5v20.500M19 6v21M24 7v21.500" stroke="#999" fill="none" />
          <path d="m8 1 21 6" stroke="#8a5ad0" strokeWidth="2" />
          <path d="m8 3 2 4 4-1-1 4 3 2-4 1 0 4-4-2-3 2 0-4-4-1 3-3-1-4 4 2z" fill="#e7e663" />
        </svg>
      </BigButton>
      <SmallGrid names={['table', 'balloonEdit', 'tableSync']} className="ml-1 grid-cols-1" />
    </Group>
    <Group className="w-[73px]">
      <BigButton label="编辑设置" className="w-full">
        <svg viewBox="0 0 32 32" className="h-8 w-8 overflow-visible">
          <text x="1" y="13" fontSize="16" fontWeight="700" fill="#54497f" fontFamily="Liberation Sans, sans-serif">A</text>
          <text x="9" y="28" fontSize="28" fontWeight="700" fontStyle="italic" fill="#3f4bc8" fontFamily="Liberation Serif, serif">A</text>
          <path d="M5 30.500h24" stroke="#3f4bc8" />
        </svg>
      </BigButton>
    </Group>
    <Group label="标准化工具..." className="w-[104px]">
      <div className="pt-[3px] pl-1">
        <IconRow names={['assem', 'layers', 'layersDoc', '|', 'tag']} />
        <IconRow names={['cubeOk', 'sheetOk', 'boxOk', '|', 'boxEdit']} />
      </div>
    </Group>
    <Group label="制图工具 - GC工具箱" className="min-w-[396px] flex-1">
      <div className="pt-[3px] pl-1">
        <IconRow names={gcRow1} />
        <IconRow names={gcRow2} />
      </div>
    </Group>
    <Group label="尺寸快速格式化工具 - GC工具箱" className="w-[288px]">
      <div className="pt-[3px] pl-1">
        <IconRow names={fmtRow1} />
        <IconRow names={fmtRow2} />
      </div>
    </Group>
    <div className="flex w-[21px] items-end justify-center pb-2.5"><Caret /></div>
  </div>
);

const Combo: React.FC<{ label: string; options: string[]; className: string }> = ({ label, options, className }) => (
  <label className={`grid items-center ${className}`}>
    <select aria-label={label} className="col-start-1 row-start-1 h-6 w-full appearance-none border border-[#a2a2a2] bg-white pl-0.5 text-sm outline-none">
      {options.map((o) => (
        <option key={o}>{o}</option>
      ))}
    </select>
    <Caret className="pointer-events-none col-start-1 row-start-1 mr-[7px] justify-self-end" />
  </label>
);

const snaps: [string, boolean][] = [
  ['snap', true], ['lineEnd', true], ['lineMid', true], ['curveEnd', false], ['poly', true], ['spline', true],
  ['crossArc', false], ['circPt', true], ['quadPt', false], ['plusPt', true], ['linePt', true], ['face', false],
];

const SelectionBar = () => (
  <div className="flex h-9 items-center border-b border-[#8b8b8b] bg-white pl-[10px]">
    <button type="button" className="flex items-center gap-1 text-sm whitespace-nowrap">
      <Icon name="menu" />
      <span>菜单(<u>M</u>)</span>
      <Caret />
    </button>
    <Sep className="ml-2 h-7" />
    <Combo label="类型过滤器" options={['']} className="ml-3 w-[167px]" />
    <Combo label="选择范围" options={['整个装配', '在工作部件内']} className="ml-2 w-[176px]" />
    <IconButton name="filter" className="ml-1.5 h-6 w-[23px]" />
    <IconButton name="filterBox" />
    <Caret className="mx-0.5" />
    {['ghost1', 'ghost2', 'ghost3', 'selRect'].map((name) => (
      <IconButton key={name} name={name} className="h-6 w-[25px]" />
    ))}
    <Caret className="mr-2 ml-0.5" />
    <div className="flex gap-0.5">
      {snaps.map(([name, on]) => (
        <IconButton
          key={name}
          name={name}
          className={on ? 'h-[22px] w-[23px] border border-[#a9d2dc] bg-[#cfe8ec]' : 'h-[22px] w-[23px]'}
        />
      ))}
    </div>
    <Sep className="mr-1.5 ml-[7px] h-7" />
    <IconButton name="zoomWin" className="h-6 w-[25px]" />
    <IconButton name="pan" className="h-6 w-[25px]" />
    <IconButton name="fit" className="h-6 w-[25px]" />
    <Caret className="mx-[3px]" />
    <IconButton name="orient" className="h-6 w-[25px]" />
    <Caret className="mr-2.5 ml-[3px]" />
    <Sep className="mr-1.5 h-7" />
    <IconButton name="wheel" />
    <Sep className="ml-[3px] h-7" />
    <Caret className="mt-3 mr-[7px] ml-auto" />
  </div>
);

const railIcons = [
  {
    id: 'assembly',
    box: 'h-10',
    art: (<><path d="m1 3 4-2 4 2v5l3-1v4l-4 2-7-2z" fill="#f2c231" stroke="#9a7413" strokeWidth=".7" /><path d="M5 13v10M5 17h7M14 12h8" stroke="#27348b" strokeWidth="1.300" /><path d="m13 17 4-2 4 1v4l-4 2-4-1z" fill="#f2c231" stroke="#9a7413" strokeWidth=".7" /></>),
  },
  {
    id: 'part',
    box: 'h-[45px] bg-white border-y border-[#a5a5a5]',
    art: (<><path d="M1 3c3-2 6-2 9 0v7c-3 2-6 2-9 0z" fill="#b070b0" stroke="#7a2a7a" /><path d="M5 13v9M5 17h6M13 9h9" stroke="#27348b" strokeWidth="1.300" /><circle cx="16" cy="18" r="4" fill="#fff" stroke="#a03a8a" strokeWidth="1.500" /><circle cx="16" cy="18" r="1.500" fill="none" stroke="#a03a8a" /></>),
  },
  {
    id: 'reuse',
    box: 'h-10',
    art: (<><path d="M0 7 4 2h5v3h3l2-3h9v15l-3 5H0z" fill="#b7b7b7" /><path d="M0 7h6v15H0z" fill="#f28a20" /><path d="M7 7h6v15H7z" fill="#2bb33a" /><path d="M14 7h6v15h-6zM20 7l3-5v15l-3 5z" fill="#2f7fd6" /><path d="m0 7 4-5h4L6 7zM7 7l3-5h4l-1 5zM14 7l3-5h6l-3 5z" fill="#f6f6f6" stroke="#777" strokeWidth=".5" /></>),
  },
  {
    id: 'info',
    box: 'h-[66px]',
    art: (<><circle cx="8" cy="15" r="7.500" fill="#1f78d8" stroke="#0d4d99" /><path d="M8 13v6M8 9.500v2" stroke="#fff" strokeWidth="3" /><path d="M9 5c5 0 8 4 9 8M9 1c8 0 13 6 14 12" fill="none" stroke="#2f73c9" strokeWidth="2" /></>),
  },
  {
    id: 'web',
    box: 'h-[42px]',
    art: (<><path d="M3 1h13l5 5v17H3z" fill="#fff" stroke="#2c7fb0" strokeWidth="1.300" /><circle cx="12" cy="14" r="6" fill="#2d8fae" /><path d="m12 9 4 8-4 2-4-3z" fill="#3faa4a" /></>),
  },
  {
    id: 'history',
    box: 'h-[66px]',
    art: (<><circle cx="12" cy="12" r="10" fill="#eceff3" stroke="#70777f" strokeWidth="2.500" /><path d="M12 6v6.500h5" fill="none" stroke="#222" strokeWidth="1.500" /><path d="M12 3.500v1M12 20v1M3.500 12h1M20 12h1" stroke="#444" /></>),
  },
  {
    id: 'process',
    box: 'h-5',
    art: (<><path d="M8 4 18 1.500l4 3-2 1.500-2-2-5 1-2 6 4 4" fill="none" stroke="#4d4d4d" strokeWidth="2" /><path d="m2 14 6-2M3 17l5-1M4 21h13" stroke="#777" strokeWidth="2" /><circle cx="5" cy="20" r="3" fill="#f08a28" /><circle cx="14" cy="19" r="2.500" fill="#555" /></>),
  },
];

const ResourceRail = () => (
  <aside className="flex w-8 shrink-0 flex-col items-end border-r border-[#9a9a9a] bg-[#dcdcdc]">
    <button type="button" aria-label="设置" className="flex h-7 w-full items-center justify-center">
      <svg viewBox="0 0 16 16" className="h-4 w-4">
        <circle cx="8" cy="8" r="4.500" fill="none" stroke="#222" strokeWidth="1.500" />
        <path d="M8 1v2M8 13v2M1 8h2M13 8h2M3 3l1.500 1.500M11.500 11.500 13 13M13 3l-1.500 1.500M4.500 11.500 3 13" stroke="#222" strokeWidth="1.500" />
      </svg>
    </button>
    <div className="mt-3.5 flex w-full flex-col">
      {railIcons.map((r) => (
        <button type="button" key={r.id} aria-label={r.id} className={`ml-0.5 flex items-center justify-center pl-[3px] ${r.box}`}>
          <svg viewBox="0 0 24 24" className="h-6 w-6 shrink-0">{r.art}</svg>
        </button>
      ))}
    </div>
  </aside>
);

// One 19px guide cell: f first, e last, p plus, m minus, v vertical, t tee, l corner, s space
const Guide: React.FC<{ kind: string }> = ({ kind }) => (
  <svg viewBox="0 0 19 24" className="h-6 w-[19px] shrink-0" aria-hidden="true">
    <g stroke="#8c8c8c" strokeDasharray="1 2" fill="none">
      {'vtpme'.includes(kind) && <path d="M9.500 0v12" />}
      {'vtpmf'.includes(kind) && <path d="M9.500 12v12" />}
      {kind === 'l' && <path d="M9.500 0v12" />}
      {'tlpmfe'.includes(kind) && <path d="M10 12.500h9" />}
    </g>
    {'pmfe'.includes(kind) && (
      <>
        <rect x="4.500" y="7.500" width="10" height="10" fill="#fff" stroke="#dcdcdc" />
        <path d={kind === 'p' ? 'M6 12.500h7M9.500 9v7' : 'M6 12.500h7'} stroke="#333" />
      </>
    )}
  </svg>
);

type Row = { guides: string; icons: string[]; text: string; status?: string; check?: boolean; dim?: boolean; bold?: boolean };

const rows: Row[] = [
  { guides: 'f', icons: ['clock', 'sheets'], text: '图纸' },
  { guides: 'vm', icons: ['ok', 'sheet'], text: '工作表 "A0_1" (...', status: 'ok' },
  { guides: 'vvp', icons: ['ok', 'ell'], text: '导入的 "Back...', status: 'ok' },
  { guides: 'vvt', icons: ['ok', 'plate'], text: '导入的 "Top...', status: 'ok' },
  { guides: 'vvt', icons: ['ok', 'ortho'], text: '投影 "ORTH...', status: 'ok' },
  { guides: 'vvl', icons: ['okRed', 'sketch'], text: '草图 "SKETC...' },
  { guides: 'vp', icons: ['clock', 'sheet'], text: '工作表 "A3_1"', status: 'bad' },
  { guides: 'vl', icons: ['ask', 'folder'], text: '过时' },
  { guides: 'p', icons: ['folder'], text: '链接' },
  { guides: 'p', icons: ['folder'], text: '组' },
  { guides: 'e', icons: ['folder'], text: '模型历史记录' },
  { guides: 'st', icons: ['linkCurve'], text: '链接复合曲线 (1)', status: 'ask', check: true },
  { guides: 'st', icons: ['linkPlane'], text: '链接的基准平面 ...', status: 'ask', check: true, dim: true },
  { guides: 'st', icons: ['linkPlane'], text: '链接的基准平面 ...', status: 'ask', check: true, dim: true },
  { guides: 'sl', icons: ['linkPlane'], text: '链接的基准平面 ...', status: 'ask', check: true, dim: true, bold: true },
];

const textTone = (row: Row) => {
  if (row.bold) return 'text-[#909090] font-medium';
  return row.dim ? 'text-[#a3a3a3]' : 'text-[#222]';
};

const TreeTable = () => (
  <table className="w-full table-fixed border-collapse text-[15px] text-[#222]">
    <colgroup>
      <col className="w-[199px]" />
      <col className="w-[100px]" />
      <col />
    </colgroup>
    <thead>
      <tr className="h-[25px] border-b border-[#d0d0d0] bg-[#efefef] text-left">
        <th className="border-r border-[#d0d0d0] pl-[6px] font-normal">
          <span className="flex items-center gap-[18px] leading-6">
            名称
            <svg viewBox="0 0 12 7" className="h-[7px] w-3"><path d="M0 7h12L6 0z" fill="#111" /></svg>
          </span>
        </th>
        <th className="border-r border-[#d0d0d0] pl-[6px] font-normal leading-6">最新</th>
        <th className="pl-[6px] font-normal leading-6">附注</th>
      </tr>
    </thead>
    <tbody>
      {rows.map((row, i) => (
        <tr key={i} className="h-6 border-b border-[#e9e9e9] odd:bg-white even:bg-[#f8f8f8]">
          <td className="border-r border-[#e2e2e2] p-0">
            <label className="flex h-[23px] items-center overflow-hidden whitespace-nowrap">
              {row.guides.split('').map((g, k) => (
                <Guide key={k} kind={g} />
              ))}
              {row.check && (
                <span className="grid h-4 w-4 place-items-center">
                  <input type="checkbox" defaultChecked className="col-start-1 row-start-1 h-[13px] w-[13px] appearance-none border border-black bg-white" />
                  <Icon name="ok" className="pointer-events-none col-start-1 row-start-1 h-[13px] w-[13px]" />
                </span>
              )}
              {row.icons.map((name, k) => (
                <Icon key={k} name={name} className="h-[15px] w-4" />
              ))}
              <span className={`ml-[3px] leading-[22px] ${textTone(row)}`}>{row.text}</span>
            </label>
          </td>
          <td className="border-r border-[#e2e2e2] p-0 pl-[5px]">{row.status && <Icon name={row.status} className="h-[15px] w-[15px]" />}</td>
          <td />
        </tr>
      ))}
    </tbody>
  </table>
);

const Chevron: React.FC<{ up?: boolean }> = ({ up }) => (
  <svg viewBox="0 0 14 12" className="h-3 w-3.5">
    <path d={up ? 'M1.500 11 7 2.500 12.500 11' : 'M1.500 1 7 9.500 12.500 1'} fill="none" stroke="#14668a" strokeWidth="2.600" />
  </svg>
);

const relButtons = [
  {
    id: '查找',
    cls: 'border-[#8e8e8e]',
    art: (<><circle cx="11" cy="10" r="8" fill="#e9edf0" stroke="#555" strokeWidth="1.500" /><path d="m16 16 8 8" stroke="#333" strokeWidth="3.500" /><path d="m16 16 3 3" stroke="#c4b650" strokeWidth="3" /></>),
  },
  { id: '前进', cls: 'border-[#c9c9c9]', art: <path d="M8 9h7V5l8 8-8 8v-4H8z" fill="#b5b9bc" /> },
  { id: '后退', cls: 'border-[#8e8e8e]', art: <path d="M20 9h-7V5l-8 8 8 8v-4h7z" fill="#49b7d0" stroke="#24618a" /> },
  {
    id: '列表',
    cls: 'border-[#c9c9c9]',
    art: (<><path d="M4 2h7v6H4zM4 10h7v6H4zM4 18h7v6H4z" fill="#cfcfcf" /><path d="M4 5h10M4 13h10M4 21h10M7.500 2v22" stroke="#a2a2a2" /><path d="M17 3c4 0 4 1 4 4M17 11c4 0 4 1 4 4M17 19c4 0 4 1 4 4M19 6l2 2 2-2M19 14l2 2 2-2M19 22l2 2 2-2" fill="none" stroke="#c9aaa5" strokeWidth="1.500" /></>),
  },
];

const Navigator = () => (
  <section className="flex w-[384px] shrink-0 flex-col border-r-2 border-[#8f8f8f] bg-white px-1.5">
    <div className="flex h-[31px] items-center justify-between pt-0.5 pr-2.5 pl-1">
      <h2 className="text-[15px] text-[#222]">部件导航器</h2>
      <button type="button" aria-label="最大化面板" className="h-[13px] w-[14px] border border-t-2 border-[#222]" />
    </div>
    <div className="flex h-[420px] w-[368px] flex-col border border-[#d4d4d4] bg-[#f8f8f8] p-px pt-0">
      <TreeTable />
      <div className="flex flex-1"><span className="w-[199px] border-r border-[#e2e2e2]" /><span className="w-[100px] border-r border-[#e2e2e2]" /></div>
      <div className="flex h-5 items-center bg-[#f0f0f0]">
        <button type="button" aria-label="向左滚动" className="flex w-[21px] justify-center">
          <svg viewBox="0 0 8 10" className="h-2.5 w-2"><path d="M6.500 0 1.500 5l5 5" fill="none" stroke="#444" strokeWidth="1.700" /></svg>
        </button>
        <div className="h-full w-[292px] bg-[#cdcdcd]" />
        <button type="button" aria-label="向右滚动" className="ml-auto flex w-[21px] justify-center">
          <svg viewBox="0 0 8 10" className="h-2.5 w-2"><path d="M1.500 0l5 5-5 5" fill="none" stroke="#444" strokeWidth="1.700" /></svg>
        </button>
      </div>
    </div>
    <div className="h-[5px] w-[368px] border-y border-[#a9a9a9] bg-[#dcdcdc]" />
    <div className="flex w-[368px] flex-1 flex-col border-x border-b border-[#dadada] pr-1.5 pb-1.5 pl-1.5">
      <button type="button" className="flex h-8 shrink-0 items-center justify-between text-lg text-[#14668a]">
        相关性
        <Chevron up />
      </button>
      <div className="flex flex-1 gap-0.5">
        <ul className="flex-1 overflow-hidden border border-[#d9d9d9] px-0.5">
          {Array.from({ length: 12 }).map((_, i) => (
            <li key={i} className="h-6 border-b border-[#ebebeb] odd:bg-white even:bg-[#f9f9f9]" />
          ))}
        </ul>
        <div className="flex flex-col gap-0.5">
          {relButtons.map((b) => (
            <button type="button" key={b.id} aria-label={b.id} className={`flex h-8 w-8 items-center justify-center border ${b.cls}`}>
              <svg viewBox="0 0 26 26" className="h-[26px] w-[26px]">{b.art}</svg>
            </button>
          ))}
        </div>
      </div>
    </div>
    {['细节', '预览'].map((name) => (
      <button type="button" key={name} className="flex h-7 w-[368px] items-center justify-between border-b-2 border-[#cfcfcf] px-[6px] text-lg text-[#14668a]">
        {name}
        <Chevron />
      </button>
    ))}
    <div className="h-1.5" />
  </section>
);

const Socket: React.FC<{ x: number; y: number }> = ({ x, y }) => (
  <g>
    <path d={`M${x - 23} ${y}h46M${x} ${y - 23}v46`} strokeWidth="1" strokeDasharray="16 3 8 3" />
    <circle cx={x} cy={y} r="7" strokeWidth="3.500" />
    <circle cx={x} cy={y} r="4" strokeWidth="1.300" strokeDasharray="2 1" />
    <path d={`M${x - 4} ${y}h8M${x} ${y - 4}v8`} strokeWidth="1" />
  </g>
);

const Stud: React.FC<{ x: number; cut?: boolean }> = ({ x, cut }) => (
  <g>
    <path d={`M${x - 11} 636v-11l3-3h16l3 3v11zM${x - 13} 641l2-4h22l2 4M${x - 6} 625v11`} />
    <path d={`M${x - 12} 637h24M${x - 8} 623h16`} strokeWidth="3" />
    {!cut && <path d={`M${x - 11} 742v6l2 1h18l2-1v-6`} />}
    <path d={`M${x} 608v155`} strokeWidth="1" />
  </g>
);

const HexHead: React.FC<{ x: number }> = ({ x }) => (
  <g>
    <path d={`M${x - 8} 238v4l2 3h12l2-3v-4M${x - 3} 239v5M${x + 3} 239v5M${x - 7} 241h14`} strokeWidth="2" />
    <path d={`M${x} 231v28`} strokeWidth="1" />
  </g>
);

const Drawing = () => (
  <svg viewBox="417 231 1407 824" preserveAspectRatio="xMinYMin meet" className="block w-full" role="img" aria-label="减速器装配图">
    <g fill="none" stroke="#000" strokeWidth="1.500">
      {/* upper views */}
      <path d="M565 231v7M567 238h125v-7" strokeWidth="2" />
      <path d="M555 231v4" strokeWidth="1" />
      {[580, 628, 676].map((x) => <HexHead key={x} x={x} />)}
      <path d="M751 231v5l3 2h138l3-2v-5M751 231h144" strokeWidth="2" />
      <path d="M754 237.500h138" strokeWidth="3" />
      {[772, 823, 874].map((x) => <HexHead key={x} x={x} />)}
      <path d="M801 238v8h45v-8M802 246v126h42V246" />
      <path d="M803 372h40" strokeWidth="3" />
      <path d="M823.500 246v30M823.500 280v13M823.500 297v91" strokeWidth="1" />

      <path d="M1443 231v6h5l2 4M1587 231v6h-5l-2 4M1443 231h8v7M1587 231h-8v7M1450 238h130" strokeWidth="2" />
      <path d="M1448 242h20M1474 242h24M1532 242h24M1562 242h20" strokeWidth="6" strokeDasharray="3 1" />
      <path d="M1494 238v8h43v-8M1494 246v125M1536 246v125M1488 252v118h6M1488 252l2-1h4" strokeWidth="2" />
      <path d="M1495 372h40" strokeWidth="3" />
      <path d="M1453 231v28M1459 231v28M1480 231v28M1489 231v28M1540 231v28M1548 231v28M1570 231v28M1574 231v28" strokeWidth="1" strokeDasharray="14 2" />
      <path d="M1514.500 231v45M1514.500 280v13M1514.500 297v91" strokeWidth="1" />

      {/* snap cursor */}
      <circle cx="1053" cy="277" r="14" strokeWidth="1.300" strokeDasharray="5 2" />
      <path d="M1053 257v40M1034 277h38" strokeWidth="4" />
      <path d="M1053 259v36M1036 277h34" stroke="#fff" strokeWidth="1" />

      {/* upper housing */}
      <path d="M564 677V482h506v195M564 507h506" strokeWidth="2" />
      <path d="M753 507v110M770 507v110M948 507v118M965 507v118" strokeWidth="2" />
      <path d="M1070 504h4v15h-4M1074 506h7v11h-7M1074 511.500h7" strokeWidth="2" />
      <path d="M1057 511.500h13M1081 511.500h8" strokeWidth="1" strokeDasharray="6 2" />
      <path d="m1070 567 18 28v5M1073 610l15-12M1070 610l18-13M1072 612l17-10 2 6-16 9zM1077 620l18-11v6l-15 9zM1080 622l10 1 4-6" />
      <path d="m1068 585 31 54" strokeWidth="1" strokeDasharray="10 2 3 2" />

      {/* lower housing outline */}
      <path d="M529 697v-49l5-5h10l3 7v3l5 2c7 0 12-3 12-7" />
      <path d="M529 697v110q1 7 9 10l142 52" />
      <path d="M565 719a200 200 0 0 0 31 80 200.500 200.500 0 0 0 254 68l246-120q10-5 10-14v-85l-5-5h-9q-2 12-9 12h-6q-6 0-7-7" />
      <path d="M1071 697q-4 62-62 93" />
      <circle cx="552" cy="794" r="8.500" />
      <path d="M529 794h15M547 794h10M562 794h13M552 771v14M552 789v10M552 803v14" strokeWidth="1" />
      <circle cx="1084" cy="728" r="8.700" />
      <path d="M1061 728h12M1078 728h12M1095 728h11M1084 706v12M1084 722v10M1084 738v13M1073 713v30" strokeWidth="1" />

      {/* split flanges */}
      <path d="M529 677h162M529 697h162M1020 677h86M1020 697h86M529 677v20M1106 677v20" strokeWidth="2" />
      <path d="M529 687h577" strokeWidth="2.500" />
      <path d="M536 673v-12l4-4h13l4 4v12M545 657v16M532 677l4-4h22l2 4M535 697v7h21v-7M540 657l1-3h9l2 3" strokeWidth="1.700" />
      <path d="M536 673h21M540 658h13" strokeWidth="3" />
      <path d="M545.500 640v79M562.500 670v63" strokeWidth="1" strokeDasharray="20 3" />
      <path d="M555 697v6l2 3h11l2-3v-6M558 706v5h9v-5M555 712h14v6h-14zM562 698v8M560 712v6M565 712v6" />
      <path d="M1078 672v-12l4-4h14l3 4v12M1089 656v16M1074 677v-8h10M1086 676l3-4h11l3 4M1073 697v6h10M1079 697v8h20v-8M1082 656l2-3h10l2 3" strokeWidth="1.700" />
      <path d="M1079 673h21M1082 657h14" strokeWidth="3" />
      <path d="M1089.500 640v79M1079.500 655v62" strokeWidth="1" />

      {/* bearing housing */}
      <rect x="675" y="641" width="362" height="101" fill="#cccccc" strokeWidth="1.700" />
      <path d="M675 677h16M675 697h16M675 687h345" strokeWidth="2" />
      <path d="M1020 677h17M1020 697h17M1020 687h17" strokeWidth="2" />
      <Stud x={691} />
      <Stud x={835} />
      <Stud x={892} />
      <Stud x={1018} cut />
      <path d="M1012 714v27h-4v8h21v-8h-4v-30l6-7h6M1012 714l-10 27" />
      <path d="m1026 730 10-10M1026 740l10-10M1013 722l10 10M1013 734l12 12M1003 740l8-10M1027 720l8-9" strokeWidth="1" />

      <circle cx="762" cy="687" r="71" fill="#cccccc" strokeWidth="3" />
      <circle cx="762" cy="687" r="50" strokeWidth="1" />
      <circle cx="762" cy="687" r="47.500" />
      <circle cx="762" cy="687" r="41" />
      <path d="M691 687h46M741 687h8M756 687h12M775 687h58M762 602v58M762 664v14M762 682v10M762 697v75" strokeWidth="1" />
      {[[762, 627], [711, 653], [813, 653], [711, 721], [813, 721], [763, 747]].map(([x, y]) => (
        <Socket key={`${x}-${y}`} x={x} y={y} />
      ))}

      <circle cx="957" cy="687" r="63.500" fill="#cccccc" strokeWidth="1.700" />
      <circle cx="957" cy="687" r="46.500" strokeWidth="1" strokeDasharray="18 2 6 2" />
      <circle cx="957" cy="687" r="36.500" />
      <circle cx="957" cy="687" r="31.500" />
      <circle cx="957" cy="687" r="19" strokeWidth="4" />
      <circle cx="957" cy="687" r="15.500" strokeWidth="1.500" strokeDasharray="4 1" />
      <path d="M894 687h28M926 687h22M966 687h20M990 687h31M957 609v64M957 696v69" strokeWidth="1" />
      <path d="M950 687h14M957 680v14M960 680v14" />
      {[[957, 631], [909, 661], [1005, 661], [909, 712], [1005, 712], [957, 741]].map(([x, y]) => (
        <Socket key={`${x}-${y}`} x={x} y={y} />
      ))}

      {/* inspection cover on the sloped wall */}
      <path d="m882 853 8 17 105-51-7-18" />
      <path d="m886 861 106-52" strokeWidth="3" />
      <path d="m891 870 3 4 9-2 1-6M894 871h9M984 824l3 4 9-3v-6M986 826l9-3" strokeWidth="2" />
      <path d="m937 846 6 10-3 3v5l9-3 8-8-4-2-3-11M941 858l13-5M942 864l8-1" strokeWidth="2" />
      <path d="m889 848 19 39M933 822l27 55M982 805l18 38" strokeWidth="1" strokeDasharray="12 2 4 2" />
    </g>
  </svg>
);

const Canvas = () => (
  <main className="flex min-w-0 flex-1 flex-col bg-white">
    <div className="flex h-6 text-base leading-6">
      <button type="button" className="flex w-[153px] items-center gap-1.5 pl-1 whitespace-nowrap text-[#222]">
        <Icon name="part" />
        _model1.prt
        <Icon name="lock" className="h-3 w-3" />
      </button>
      <button type="button" className="flex items-center gap-1 bg-[#549fb7] pr-1.5 pl-1.5 whitespace-nowrap text-white">
        <Icon name="drafting" />
        装配1.14.17.prt(!)
        <svg viewBox="0 0 12 12" className="h-3 w-3"><path d="M2 2h6v9H2zM6 7l4-4" fill="none" stroke="#fff" strokeWidth="1.500" /></svg>
        <svg viewBox="0 0 12 12" className="h-3 w-3"><path d="m2 2 8 8M10 2l-8 8" stroke="#fff" strokeWidth="2.500" /></svg>
      </button>
    </div>
    <div className="relative flex-1 overflow-hidden border-t-3 border-r-2 border-b-2 border-l border-t-[#5b97aa] border-r-[#8f8f8f] border-b-[#8f8f8f] border-l-[#777] bg-[#cccccc]">
      <Drawing />
      <span className="absolute bottom-0 left-2.5 font-['Liberation_Sans',sans-serif] text-sm text-black">"A0_1"</span>
      <div className="absolute top-[535px] right-[94px] flex h-[58px] w-[58px] flex-col items-center rounded-full bg-[#2d2f33] pt-1.5 shadow-[0_0_5px_#555]">
        <svg viewBox="0 0 46 27" className="h-[27px] w-[46px]">
          <path d="M0 27C0-7 46-7 46 27z" fill="#101418" />
          <path d="M0 21c4 0 5-2 8-2s5 3 8 3 5-3 8-3 5 3 8 3 5-3 8-3 4 2 6 2v6H0z" fill="#1297f5" />
        </svg>
        <span className="text-sm leading-4 text-white">02:28</span>
      </div>
    </div>
  </main>
);

const StatusBar = () => (
  <footer className="flex h-[23px] shrink-0 items-center border-t border-[#9a9a9a] bg-white pl-[3px] text-sm leading-5 font-bold text-[#222]">
    <span className="flex-1">选择对象并使用 MB3，或双击，或按住并拖动来移动视图、尺寸或注释</span>
    <span className="pl-3">草图需要 10 个约束</span>
    <span className="flex flex-1 justify-end gap-1">
      <Icon name="flag" />
      <Icon name="full" className="mr-[55px] h-4 w-4" />
    </span>
  </footer>
);

const TaskButton: React.FC<{ label: string; className?: string; children: React.ReactNode }> = ({ label, className = 'h-[50px]', children }) => (
  <button type="button" aria-label={label} className={`flex w-full shrink-0 items-center justify-center ${className}`}>
    {children}
  </button>
);

const Taskbar = () => (
  <aside className="flex w-[94px] shrink-0 flex-col bg-[#363636] text-white">
    <TaskButton label="开始">
      <svg viewBox="0 0 20 20" className="h-5 w-5"><path d="M0 3 8.500 1.800v7.700H0zM9.500 1.600 20 0v9.500H9.500zM0 10.500h8.500v7.700L0 17zM9.500 10.500H20V20L9.500 18.400z" fill="#fff" /></svg>
    </TaskButton>
    <TaskButton label="Cortana">
      <svg viewBox="0 0 20 20" className="h-5 w-5"><circle cx="10" cy="10" r="8.300" fill="none" stroke="#fff" strokeWidth="2.300" /></svg>
    </TaskButton>
    <TaskButton label="任务视图">
      <svg viewBox="0 0 20 20" className="h-5 w-5"><path d="M1 0v4h12V0M1 20v-4h12v4M1 6h12v8H1zM18.500 0v5M18.500 11v9" fill="none" stroke="#fff" strokeWidth="1.200" /><path d="M17 6.500h3v3h-3z" fill="#fff" /></svg>
    </TaskButton>
    <TaskButton label="Edge" className="mt-1 h-[59px]">
      <svg viewBox="0 0 24 27" className="h-[27px] w-6"><path d="M0 13C1 4 6 0 12.500 0 20 0 24 5 24 12v3H8c0 4 3 6.500 7.500 6.500 3 0 5.500-.8 7.500-2v5.300C20.500 26 17.500 27 14 27 7 27 2.800 22.500 2.800 16.500c0-4 2-7 5.200-9C3.500 7.500 1 10 0 13zM8.200 10.500h8.500C16.700 8 15.300 6 12.600 6S8.600 7.800 8.200 10.500z" fill="#0f7fdc" fillRule="evenodd" /></svg>
    </TaskButton>
    <TaskButton label="浏览器" className="h-[58px]">
      <svg viewBox="0 0 30 28" className="h-7 w-[30px]">
        <path d="M15 27.500C6 22 .7 16 .7 9c0-8 10-11 14.300-5C19.300-2 29.300 1 29.300 9c0 7-5.300 13-14.300 18.500z" fill="#f59324" stroke="#fbd8a8" />
        <path d="M3 8c1-5 8-6 11-2 4-3 9-2 11 1-8-1-14 2-22 1z" fill="#fbc93d" />
        <path d="M10 14.500c4 0 10-1 10-4.500 0-4-6-4-9 0s-2 9 2 9c3 0 5-1 7-3" fill="none" stroke="#d8eef2" strokeWidth="4.500" />
        <path d="M10 14.500c4 0 10-1 10-4.500 0-4-6-4-9 0s-2 9 2 9c3 0 5-1 7-3" fill="none" stroke="#2a8fb8" strokeWidth="3" />
      </svg>
    </TaskButton>
    <TaskButton label="应用商店" className="h-[59px]">
      <svg viewBox="0 0 29 29" className="h-[29px] w-[29px]">
        <path d="M9 8c0-9 11-9 11 0M12 8c0-7 9-7 9 0" fill="none" stroke="#ddd" strokeWidth="1.500" />
        <path d="M0 8h29v21H0z" fill="#fff" />
        <path d="M8 12h6v6H8z" fill="#f1511b" /><path d="M15 12h6v6h-6z" fill="#80cc28" />
        <path d="M8 19h6v6H8z" fill="#00adef" /><path d="M15 19h6v6h-6z" fill="#fbbc09" />
      </svg>
    </TaskButton>
    <TaskButton label="NX" className="h-[58px] border-r-3 border-[#76b9ed] bg-[#5c5c5c] pl-[3px]">
      <svg viewBox="0 0 30 30" className="h-[30px] w-[30px]">
        <circle cx="14" cy="17" r="12" fill="#1768d0" />
        <circle cx="13" cy="14" r="8" fill="#35b4ee" />
        <circle cx="12" cy="13" r="4.500" fill="#8fe8fb" />
        <path d="M19 6c5 2 7 6 6 10l-5-2z" fill="#66b64c" />
        <path d="M25 5c9 4-2 15-17 19l1 3C26 22 36 8 25 5z" fill="#f6bb3a" stroke="#c9821c" strokeWidth=".6" />
        <path d="m0 28 8-7 2 6z" fill="#f6bb3a" stroke="#c9821c" strokeWidth=".6" />
        <path d="M3 2 16 0l-3 15z" fill="#d22742" stroke="#7c1222" strokeWidth=".6" />
        <path d="m3 2 13-2-7 5z" fill="#ef7f92" />
      </svg>
    </TaskButton>
    <div className="mt-auto flex flex-col items-center">
      <button type="button" aria-label="显示隐藏的图标" className="ml-4 flex h-6 items-center self-start">
        <svg viewBox="0 0 10 16" className="h-4 w-2.5"><path d="M9 .5 1.500 8 9 15.500" fill="none" stroke="#fff" strokeWidth="1.300" /></svg>
      </button>
      <div className="mt-2 flex w-full items-center justify-between pr-1 pl-2.5">
        <svg viewBox="0 0 22 18" className="h-[18px] w-[22px]"><path d="M1 6h3l4-4v14l-4-4H1zM11 6.500c1.500 1.500 1.500 3.500 0 5" fill="none" stroke="#fff" strokeWidth="1.300" /><path d="M14 4c3 3 3 7 0 10M17 1.500c4 4 4 11 0 15" fill="none" stroke="#888" strokeWidth="1.200" /></svg>
        <svg viewBox="0 0 20 14" className="h-3.5 w-5"><path d="M5 3h13v9.500H5zM18 6h1.500v3H18M1 0v4h4V0M3 4v9" fill="none" stroke="#fff" strokeWidth="1.300" /><path d="M6.500 6h4v5h-5z" fill="#fff" /></svg>
        <svg viewBox="0 0 16 16" className="h-4 w-4"><path d="M1 15C1 7 7 1 15 1M4.500 15C4.500 9 9 4.500 15 4.500M8 15c0-4 3-7 7-7" fill="none" stroke="#ddd" strokeWidth="1.400" /><circle cx="14" cy="14" r="1.800" fill="#fff" /></svg>
      </div>
      <span className="mt-4 text-base leading-5">中</span>
      <div className="mt-7 text-center text-[15px] leading-[22px]">
        <div>23:07</div>
        <div>星期五</div>
        <div>2019/1/18</div>
      </div>
      <button type="button" aria-label="通知" className="mt-6 flex h-8 w-8 pl-[7px]">
        <svg viewBox="0 0 30 30" className="h-[30px] w-[30px] shrink-0">
          <path d="M0 0h20v18h-8l-4 4v-4H0z" fill="#fff" />
          <path d="M4 4.500h12M4 9h12M4 13.500h7" stroke="#363636" strokeWidth="1.200" />
          <circle cx="19.500" cy="20" r="9.500" fill="#363636" stroke="#9a9a9a" strokeWidth="1.200" />
          <text x="19.500" y="25" fontSize="14" fontWeight="700" textAnchor="middle" fill="#fff">1</text>
        </svg>
      </button>
      <div className="mt-2 h-1.5 w-full border-t border-[#777]" />
    </div>
  </aside>
);

const App: React.FC = () => (
  <div className="flex h-screen w-full overflow-hidden bg-white font-['Noto_Sans','Noto_Sans_CJK_SC',sans-serif] text-[#1e1e1e]">
    <div className="flex min-w-0 flex-1 flex-col">
      <TitleBar />
      <TabBar />
      <Ribbon />
      <SelectionBar />
      <div className="flex min-h-0 flex-1">
        <ResourceRail />
        <Navigator />
        <Canvas />
      </div>
      <StatusBar />
    </div>
    <Taskbar />
  </div>
);

export default App;
